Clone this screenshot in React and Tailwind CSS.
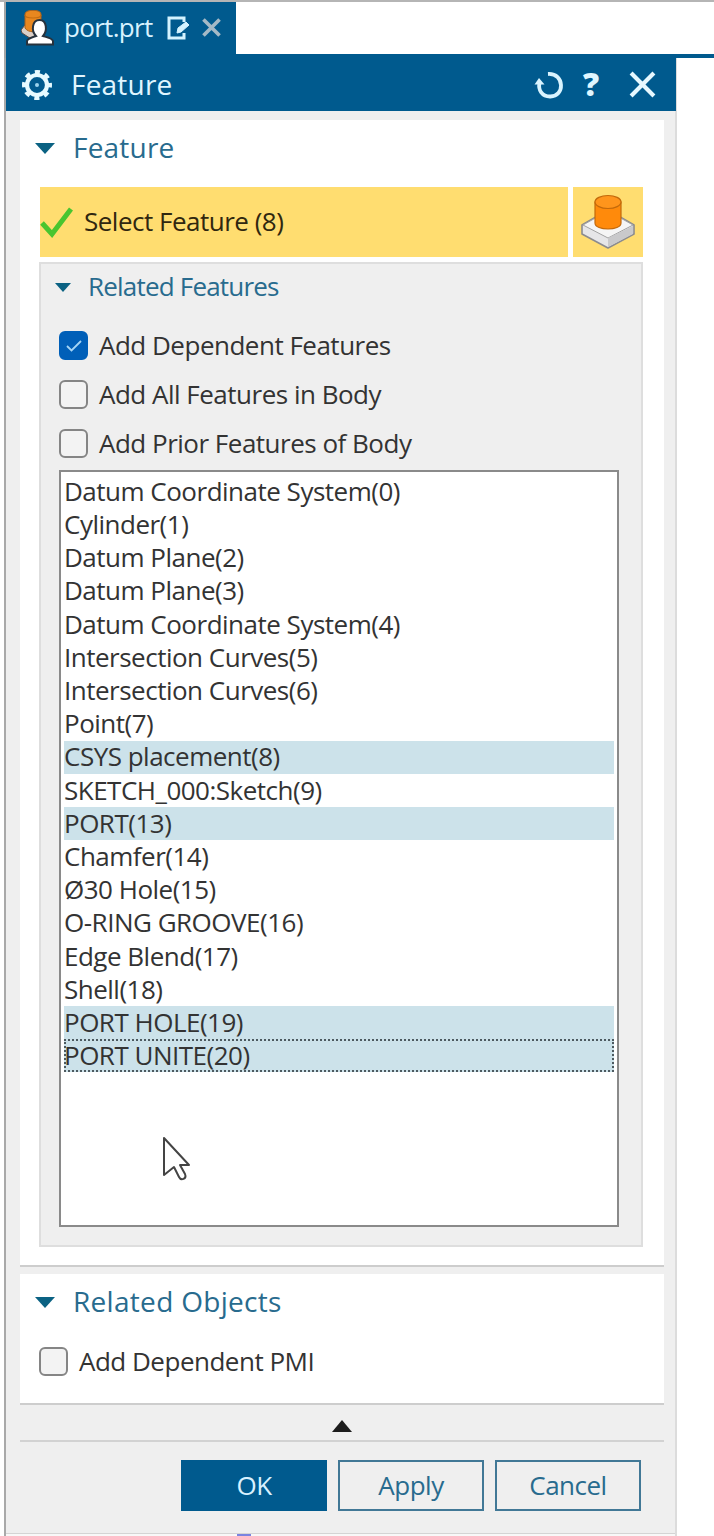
import { useState } from 'react';

const FEATURES = [
  'Datum Coordinate System(0)',
  'Cylinder(1)',
  'Datum Plane(2)',
  'Datum Plane(3)',
  'Datum Coordinate System(4)',
  'Intersection Curves(5)',
  'Intersection Curves(6)',
  'Point(7)',
  'CSYS placement(8)',
  'SKETCH_000:Sketch(9)',
  'PORT(13)',
  'Chamfer(14)',
  'Ø30 Hole(15)',
  'O-RING GROOVE(16)',
  'Edge Blend(17)',
  'Shell(18)',
  'PORT HOLE(19)',
  'PORT UNITE(20)',
];

const SELECTED = [8, 10, 16, 17];

function PartIcon() {
  return (
    <svg width="34" height="36" viewBox="0 0 34 36">
      <path d="M0 20l4-5 12 6-4 9L1 23z" fill="#d9cfc8" stroke="#5a4a45" strokeWidth="1" />
      <path d="M4 4c0-5 16-5 16 0v14c-3 5-13 5-16 0z" fill="#e8871f" stroke="#a8611d" strokeWidth="1" />
      <path d="M4 5c0 4 16 4 16 0" fill="none" stroke="#c46c10" strokeWidth="1.2" />
      <path d="M6 34.500v-3.500c1-3 6-4 9-5-5-5-4-16 3.500-16s8 11 3.500 16c3 1 9 2 10 5v3.500z" fill="#fff" stroke="#27323d" strokeWidth="2" />
    </svg>
  );
}

function EditIcon() {
  return (
    <svg width="24" height="26" viewBox="0 0 24 26" fill="none" stroke="#d4f3ff" strokeWidth="3">
      <path d="M18 7V3H3v20h15v-5" />
      <path d="M11 18l1-5 8-6 3 3-8 7z" fill="#d4f3ff" strokeWidth="1" />
    </svg>
  );
}

function GearIcon() {
  return (
    <svg width="32" height="32" viewBox="0 0 32 32" fill="none" stroke="#e6faff">
      <circle cx="16" cy="16" r="13" strokeWidth="4" strokeDasharray="5.1 5.11" strokeDashoffset="2.55" />
      <circle cx="16" cy="16" r="10" strokeWidth="4.2" />
      <circle cx="16" cy="16" r="2" fill="#9bd3ec" stroke="none" />
    </svg>
  );
}

function ResetIcon() {
  return (
    <svg width="30" height="30" viewBox="0 0 30 30" fill="none" stroke="#d9f4ff" strokeWidth="3.8">
      <path d="M14 4C31 3 31 27 16 26.500C8 26.500 4 20 5.500 13" />
      <path d="M.5 14.500L5 8l5.500 6.500z" fill="#d9f4ff" stroke="none" />
    </svg>
  );
}

function CloseIcon({ size, width, color }) {
  return (
    <svg width={size} height={size} viewBox="0 0 26 26" fill="none" stroke={color} strokeWidth={width}>
      <path d="M2 2l22 22M24 2L2 24" />
    </svg>
  );
}

function FeatureIcon() {
  return (
    <svg width="56" height="56" viewBox="0 0 56 56">
      <path d="M2 31L28 16l26 15v9L28 54 2 40z" fill="#e6e6e8" stroke="#8b8b8e" strokeWidth="1.6" strokeLinejoin="round" />
      <path d="M3 31L28 17l25 14-25 13z" fill="#f5f5f5" stroke="#a3a3a3" strokeWidth="1" />
      <path d="M28 44v9l25-13v-8z" fill="#c9c9cb" />
      <path d="M15 8v21c0 8 26 8 26 0V8z" fill="#ff8a0b" stroke="#c2690b" strokeWidth="1.2" />
      <ellipse cx="28" cy="8" rx="13" ry="6.500" fill="#ff951c" stroke="#c2690b" strokeWidth="1.2" />
    </svg>
  );
}

function Triangle({ small }) {
  return (
    <svg width={small ? 16 : 20} height={small ? 9 : 11} viewBox="0 0 20 12" preserveAspectRatio="none">
      <path d="M0 0h20L10 12z" fill="#0b6283" />
    </svg>
  );
}

function CheckRow({ label, checked, onChange }) {
  return (
    <button type="button" onClick={onChange} className="flex h-[49px] items-center gap-[11px]">
      <span
        className={`flex size-[29px] shrink-0 items-center justify-center rounded-[6px] border-2 ${
          checked ? 'border-[#005fb8] bg-[#005fb8]' : 'border-[#858585] bg-[#f3f3f3]'
        }`}
      >
        {checked && (
          <svg width="16" height="12" viewBox="0 0 16 12" fill="none" stroke="#a5d5f5" strokeWidth="1.8">
            <path d="M1 6l4.5 4.5L15 1" />
          </svg>
        )}
      </span>
      <span className="pb-[2px] whitespace-nowrap">{label}</span>
    </button>
  );
}

export default function App() {
  const [options, setOptions] = useState({ dependent: true, all: false, prior: false, pmi: false });
  const toggle = (key) => setOptions((prev) => ({ ...prev, [key]: !prev[key] }));

  return (
    <div className="flex h-[1536px] w-[714px] flex-col overflow-hidden bg-white font-['Open_Sans',sans-serif] text-[26px] leading-none tracking-[-0.5px] text-[#333]">
      <div className="flex h-[58px] shrink-0 border-t-2 border-[#b5b5b5] pl-1">
        <div className="flex w-[232px] items-center border-l-2 border-[#a5a5a5] bg-[#005a8e] pb-[5px] pl-[15px]">
          <PartIcon />
          <span className="ml-[9px] w-[88px] pb-[2px] whitespace-nowrap tracking-[-0.7px] text-[#d8f2ff]">port.prt</span>
          <span className="ml-[14px]"><EditIcon /></span>
          <span className="ml-[12px]"><CloseIcon size={19} width={5} color="#a4b9c6" /></span>
        </div>
        <div className="flex-1 border-b-4 border-[#005a8e]" />
      </div>

      <div className="ml-1 flex w-[673px] flex-1 flex-col border-x-2 border-r-[#dcdcdc] border-l-[#a9a9a9] bg-[#efefef]">
        <div className="-mr-px flex h-[53px] w-[670px] shrink-0 items-center bg-[#005a8e] pl-[15px] text-[#e0f6ff]">
          <GearIcon />
          <span className="ml-[18px] flex-1 pb-[2px] text-[28px] tracking-[0.2px]">Feature</span>
          <ResetIcon />
          <span className="ml-[19px] w-[20px] pb-[2px] text-[32px] font-extrabold">?</span>
          <span className="mr-[20px] ml-[26px]"><CloseIcon size={27} width={4} color="#e6f8ff" /></span>
        </div>

        <div className="mx-[14px] mt-[9px] flex h-[1147px] w-[644px] shrink-0 flex-col border-b-2 border-[#cdcdcd] bg-white px-[20px]">
          <div className="-ml-[5px] flex h-[67px] items-center gap-[18px] pb-[11px] text-[28px] tracking-[0.2px] text-[#286b8e]">
            <Triangle />
            <span className="pb-[3px] whitespace-nowrap">Feature</span>
          </div>

          <div className="flex h-[70px] w-[603px] gap-[5px] text-[#30270f]">
            <div className="flex w-[528px] items-center bg-[#ffdd70]">
              <svg width="34" height="32" viewBox="0 0 34 32" fill="none" stroke="#49c52f" strokeWidth="5">
                <path d="M2 17l10 11L31 3" />
              </svg>
              <span className="ml-[10px] pb-[2px] whitespace-nowrap">Select Feature (8)</span>
            </div>
            <div className="flex w-[70px] items-center justify-center bg-[#ffdd70]">
              <FeatureIcon />
            </div>
          </div>

          <div className="mt-[5px] -ml-px flex h-[985px] w-[604px] flex-col border-2 border-[#dedede] bg-[#efefef] px-[18px]">
            <div className="-ml-[4px] flex h-[57px] items-center gap-[17px] pb-[11px] tracking-[-0.8px] text-[#286b8e]">
              <Triangle small />
              <span className="pb-[3px] whitespace-nowrap">Related Features</span>
            </div>
            <CheckRow label="Add Dependent Features" checked={options.dependent} onChange={() => toggle('dependent')} />
            <CheckRow label="Add All Features in Body" checked={options.all} onChange={() => toggle('all')} />
            <CheckRow label="Add Prior Features of Body" checked={options.prior} onChange={() => toggle('prior')} />
            <div className="relative mt-[2px] h-[757px] w-[560px] border-2 border-[#8a8a8a] bg-white px-[3px] pt-[3px]">
              {FEATURES.map((name, i) => (
                <div
                  key={name}
                  className={`flex h-[33.2px] items-center pb-[1.4px] whitespace-nowrap ${SELECTED.includes(i) ? 'bg-[#cce2ea]' : ''} ${
                    i === 17 ? 'outline-2 -outline-offset-2 outline-dotted outline-[#4d5a60]' : ''
                  }`}
                >
                  {name}
                </div>
              ))}
              <svg className="absolute top-[664px] left-[101px]" width="30" height="46" viewBox="0 0 30 46">
                <path d="M2 2v37l10-8 5 10c2 4 8 2 6-3l-5-9h9z" fill="#fff" stroke="#444" strokeWidth="2" strokeLinejoin="round" />
              </svg>
            </div>
          </div>
        </div>

        <div className="mx-[14px] mt-[7px] flex h-[131px] w-[644px] shrink-0 flex-col border-b-2 border-[#cdcdcd] bg-white px-[19px]">
          <div className="-ml-[4px] flex h-[63px] items-center gap-[18px] pb-[7px] text-[28px] tracking-[0.3px] text-[#286b8e]">
            <Triangle />
            <span className="pb-[3px] whitespace-nowrap">Related Objects</span>
          </div>
          <CheckRow label="Add Dependent PMI" checked={options.pmi} onChange={() => toggle('pmi')} />
        </div>

        <div className="mx-[14px] flex h-[37px] w-[644px] shrink-0 items-center justify-center border-b-2 border-[#d2d2d2] pt-[7px]">
          <svg width="20" height="12" viewBox="0 0 20 12">
            <path d="M0 12h20L10 0z" fill="#1c1c1c" />
          </svg>
        </div>

        <div className="mt-[18px] ml-[175px] flex h-[51px] shrink-0 gap-[11px] text-[#286b8e]">
          <button type="button" className="w-[146px] bg-[#005a8e] pb-[2px] text-[#d9f1ff]">OK</button>
          <button type="button" className="w-[146px] border-2 border-[#417896] pb-[2px]">Apply</button>
          <button type="button" className="w-[146px] border-2 border-[#417896] pb-[2px]">Cancel</button>
        </div>
        <div className="mt-auto border-t border-[#d4d4d4] bg-[#f8f8f8]">
          <div className="ml-[231px] h-[2px] w-[14px] bg-[#7a84e0]" />
        </div>
      </div>
    </div>
  );
}
